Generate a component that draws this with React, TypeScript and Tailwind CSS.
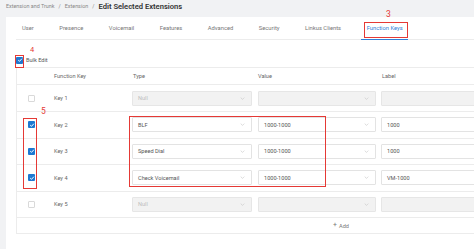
// Edit Selected Extensions – Function Keys tab (annotated screenshot)

const tabs = ['User', 'Presence', 'Voicemail', 'Features', 'Advanced', 'Security', 'Linkus Clients', 'Function Keys'];

type Row = { key: string; checked: boolean; type?: string; value?: string; label?: string };

const rows: Row[] = [
  { key: 'Key 1', checked: false },
  { key: 'Key 2', checked: true, type: 'BLF', value: '1000-1000', label: '1000' },
  { key: 'Key 3', checked: true, type: 'Speed Dial', value: '1000-1000', label: '1000' },
  { key: 'Key 4', checked: true, type: 'Check Voicemail', value: '1000-1000', label: 'VM-1000' },
  { key: 'Key 5', checked: false },
];

const Checkbox = ({ checked }: { checked: boolean }) =>
  checked ? (
    <span className="flex h-[7px] w-[7px] items-center justify-center rounded-[1px] bg-[#1f78d1]">
      <svg viewBox="0 0 10 10" className="h-[6px] w-[6px]">
        <path d="M2 5.2 L4.2 7.2 L8.2 2.8" fill="none" stroke="white" strokeWidth="1.6" />
      </svg>
    </span>
  ) : (
    <span className="block h-[7px] w-[7px] rounded-[1px] border border-[#d9d9d9] bg-white" />
  );

const Chevron = () => (
  <svg viewBox="0 0 8 5" className="h-[3px] w-[5px]">
    <path d="M1 1 L4 4 L7 1" fill="none" stroke="#c4c4c4" strokeWidth="1" />
  </svg>
);

const Select = ({ text, width, disabled }: { text?: string; width: string; disabled?: boolean }) => (
  <div
    className={`flex h-[15px] shrink-0 items-center justify-between rounded-[1px] border pl-[5px] pr-[6px] ${width} ${
      disabled ? 'border-[#e6e6e6] bg-[#f2f2f2] text-[#bdbdbd]' : 'border-[#e3e3e3] bg-white text-[#555]'
    }`}
  >
    <span>{text}</span>
    <Chevron />
  </div>
);

const Input = ({ text, disabled }: { text?: string; disabled?: boolean }) => (
  <div
    className={`flex h-[15px] w-[120px] shrink-0 items-center rounded-[1px] border pl-[5px] ${
      disabled ? 'border-[#e6e6e6] bg-[#f2f2f2]' : 'border-[#e3e3e3] bg-white text-[#555]'
    }`}
  >
    {text}
  </div>
);

export default function App() {
  return (
    <div
      className="relative h-[249px] w-[474px] overflow-hidden bg-[#f1f2f4] text-[5.6px] text-[#666]"
      style={{ fontFamily: 'Roboto, "Liberation Sans", sans-serif' }}
    >
      {/* Breadcrumb */}
      <div className="flex h-[13px] items-center gap-[4px] pl-[6px] text-[5.4px] text-[#888]">
        <span>Extension and Trunk</span>
        <span>/</span>
        <span>Extension</span>
        <span>/</span>
        <span className="text-[7.6px] font-semibold text-[#333]">Edit Selected Extensions</span>
      </div>

      {/* Card */}
      <div className="ml-[6px] mt-[4px] h-[240px] bg-white">
        {/* Tabs */}
        <div className="ml-[10px] flex h-[23px] gap-[25.5px] border-b border-[#ececec] pl-[6px] text-[5.8px]">
          {tabs.map((t) => {
            const active = t === 'Function Keys';
            return (
              <div key={t} className={`relative flex shrink-0 items-center ${active ? 'text-[#2f7fd8]' : 'text-[#777]'}`}>
                {t}
                {active && <span className="absolute bottom-[-1px] left-[-6px] right-[-5px] h-[1.5px] bg-[#2f7fd8]" />}
              </div>
            );
          })}
        </div>

        {/* Bulk edit */}
        <div className="ml-[10px] mt-[16px] flex items-center gap-[3px] text-[#555]">
          <Checkbox checked />
          <span>Bulk Edit</span>
        </div>

        {/* Table */}
        <div className="ml-[10px] mt-[3px] border-l border-[#ececec]">
          <div className="flex h-[18px] items-center border-b border-t border-[#ececec] text-[#666]">
            <div className="w-[37px] shrink-0" />
            <div className="w-[78px] shrink-0">Function Key</div>
            <div className="w-[126px] shrink-0 pl-[1px]">Type</div>
            <div className="w-[124px] shrink-0">Value</div>
            <div className="shrink-0">Label</div>
          </div>
          {rows.map((r) => {
            const disabled = !r.checked;
            return (
              <div key={r.key} className="flex h-[26.6px] items-center border-b border-[#ececec]">
                <div className="w-[37px] shrink-0 pl-[11px]">
                  <Checkbox checked={r.checked} />
                </div>
                <div className="w-[78px] shrink-0 text-[#666]">{r.key}</div>
                <div className="w-[126px] shrink-0">
                  <Select text={disabled ? 'Null' : r.type} width="w-[120px]" disabled={disabled} />
                </div>
                <div className="w-[123px] shrink-0">
                  <Select text={r.value} width="w-[118px]" disabled={disabled} />
                </div>
                <Input text={r.label} disabled={disabled} />
              </div>
            );
          })}
          <div className="flex h-[16px] items-center border-b border-[#ececec] pl-[316px] text-[#777]">
            <span className="mr-[2px] text-[7px] leading-none">+</span>Add
          </div>
        </div>
      </div>

      {/* Annotations */}
      <span className="absolute left-[386px] top-[8px] text-[8.5px] text-[#e53935]">3</span>
      <div className="absolute left-[364px] top-[22px] h-[16px] w-[44px] border-[1.5px] border-[#e53935]" />
      <span className="absolute left-[30px] top-[44px] text-[7.5px] text-[#e53935]">4</span>
      <div className="absolute left-[14.5px] top-[55px] h-[13px] w-[9px] border-[1.5px] border-[#e53935]" />
      <span className="absolute left-[41px] top-[105px] text-[8.5px] text-[#e53935]">5</span>
      <div className="absolute left-[23px] top-[118px] h-[71px] w-[14px] border-[1.5px] border-[#e53935]" />
      <div className="absolute left-[129px] top-[116px] h-[71px] w-[197px] border-[1.5px] border-[#e53935]" />
    </div>
  );
}
